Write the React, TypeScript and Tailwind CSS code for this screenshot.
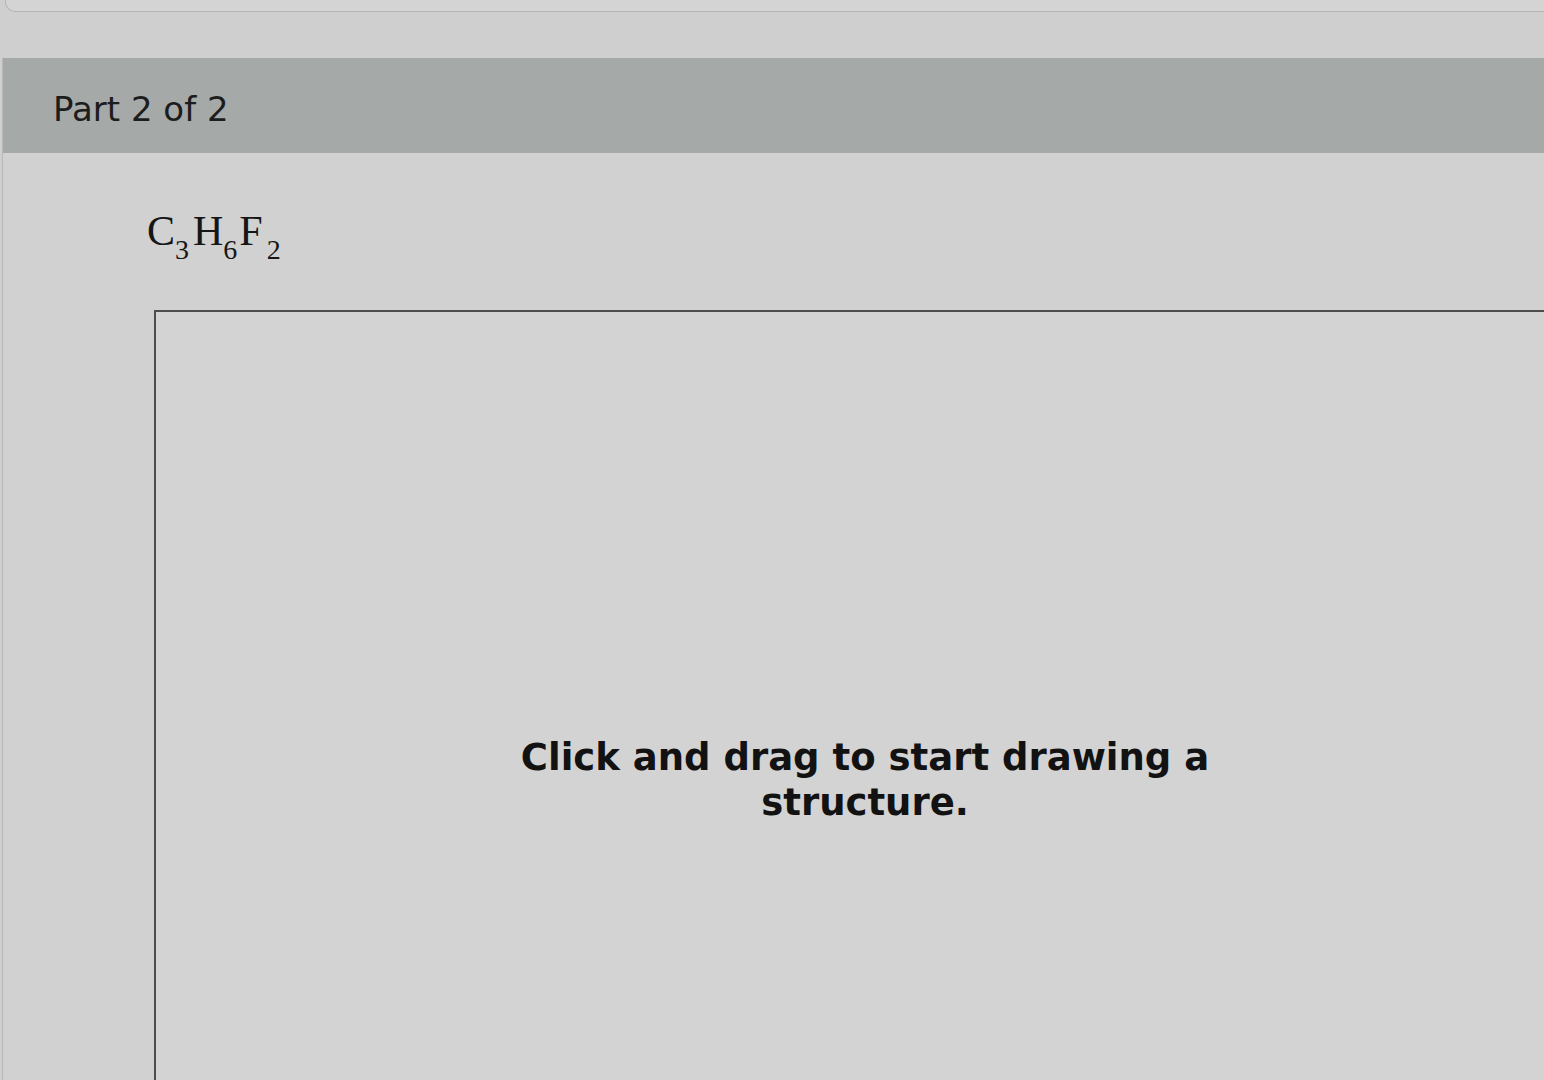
import React from "react";

const App: React.FC = () => {
  return (
    <div className="h-[1080px] w-full overflow-hidden bg-[#cfcfcf]">
      {/* bottom edge of the previous card */}
      <div className="h-[12px] ml-[5px] -mr-[20px] bg-[#d4d4d4] border-b border-l border-[#b4b4b4] rounded-bl-[10px]" />

      <div className="mt-[46px] ml-[2px] border-l border-[#b8b8b8]">
        <div className="h-[95px] bg-[#a5a9a8] flex items-center pl-[50px] pt-[6px]">
          <span className="text-[34px] text-[#1c1c1c] font-['DejaVu_Sans',sans-serif] leading-none">
            Part 2 of 2
          </span>
        </div>

        <div className="bg-[#d1d1d1] pt-[58px] pb-[200px]">
          <div className="pl-[144px] h-[40px] leading-[40px] text-[42px] text-[#161616] font-['Liberation_Serif',serif]">
            C<sub className="text-[28px] -bottom-[14px] mr-[4px]">3</sub>H
            <sub className="text-[28px] -bottom-[14px] mr-[2px]">6</sub>F
            <sub className="text-[28px] -bottom-[14px] ml-[4px]">2</sub>
          </div>

          <div className="mt-[59px] ml-[151px] w-[1420px] h-[800px] border-t-2 border-l-2 border-[#4d4d4d] bg-[#d3d3d3] pt-[423px]">
            <p className="mx-auto max-w-[760px] text-center text-[37px] leading-[45px] font-bold text-[#121212] font-['DejaVu_Sans',sans-serif]">
              Click and drag to start drawing a structure.
            </p>
          </div>
        </div>
      </div>
    </div>
  );
};

export default App;
